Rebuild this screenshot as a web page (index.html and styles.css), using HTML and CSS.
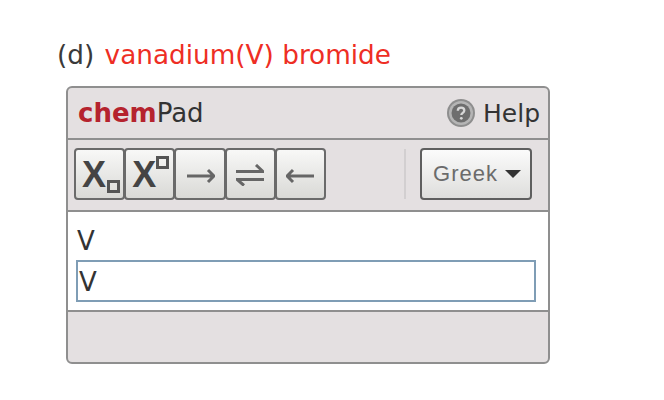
FILE: index.html
```html
<!DOCTYPE html>
<html lang="en">
<head>
    <meta charset="UTF-8">
    <title>chemPad</title>
    <link rel="stylesheet" href="styles.css">
</head>
<body>
    <div class="question">
        <p class="prompt">(d) <span class="prompt-name">vanadium(V) bromide</span></p>
        <div class="chempad">
            <div class="pad-header">
                <div class="pad-logo"><b>chem</b>Pad</div>
                <div class="pad-help">
                    <svg class="help-icon" viewBox="0 0 28 28">
                        <circle cx="14" cy="14" r="14" fill="#8e8e8e"/>
                        <circle cx="14" cy="14" r="12" fill="#b5b5b5"/>
                        <circle cx="14" cy="14" r="9.500" fill="#6e6e6e"/>
                        <path d="M10.800 11.800c0-2 1.400-3.100 3.300-3.100s3.200 1.100 3.200 2.800c0 2.400-3 2.400-3 4.600" fill="none" stroke="#d8d8d8" stroke-width="2.300"/>
                        <circle cx="14.300" cy="19.300" r="1.400" fill="#d8d8d8"/>
                    </svg>
                    <span>Help</span>
                </div>
            </div>
            <div class="pad-toolbar">
                <div class="btn-group">
                    <button class="tool-btn"><span class="x-letter">X</span><i class="box box-sub"></i></button>
                    <button class="tool-btn"><span class="x-letter">X</span><i class="box box-sup"></i></button>
                    <button class="tool-btn">
                        <svg class="arrow arrow-right" viewBox="0 0 28 22"><path d="M0 12h26M21 6l6 6-6 6" fill="none" stroke="#666" stroke-width="3"/></svg>
                    </button>
                    <button class="tool-btn">
                        <svg class="arrow" viewBox="0 0 28 22"><path d="M0 7.500h27L20 1M28 15.500H1l7 6" fill="none" stroke="#666" stroke-width="3"/></svg>
                    </button>
                    <button class="tool-btn">
                        <svg class="arrow" viewBox="0 0 28 22"><path d="M28 12H2M7 6l-6 6 6 6" fill="none" stroke="#666" stroke-width="3"/></svg>
                    </button>
                </div>
                <div class="toolbar-sep"></div>
                <button class="greek-btn">Greek<i class="caret"></i></button>
            </div>
            <div class="pad-body">
                <div class="preview">V</div>
                <div class="entry">V</div>
            </div>
            <div class="pad-footer"></div>
        </div>
    </div>
</body>
</html>
```

FILE: styles.css
```css
* {
    margin: 0;
    padding: 0;
    box-sizing: border-box;
}

body {
    font-family: 'DejaVu Sans', sans-serif;
    background: #fff;
    color: #333;
}

.question {
    padding: 39px 0 0 57px;
}

.prompt {
    font-size: 26.3px;
    line-height: 32px;
    color: #3a3a3a;
}

.prompt-name {
    margin-left: 2px;
    color: #ee2e24;
}

.chempad {
    width: 484px;
    height: 278px;
    margin: 15px 0 0 9px;
    display: flex;
    flex-direction: column;
    background: #e4e0e1;
    border: 2px solid #8f8f8f;
    border-radius: 6px;
}

.pad-header {
    height: 52px;
    padding: 0 8px 0 10px;
    display: flex;
    align-items: center;
    justify-content: space-between;
    border-bottom: 2px solid #8f8f8f;
}

.pad-logo {
    font-size: 26px;
    color: #333;
}

.pad-logo b {
    color: #b5232e;
}

.pad-help {
    display: flex;
    align-items: center;
    gap: 8px;
    font-size: 25px;
    color: #333;
}

.help-icon {
    width: 28px;
    height: 28px;
}

.pad-toolbar {
    height: 72px;
    padding: 0 16px 3px 6px;
    display: flex;
    align-items: center;
    border-bottom: 2px solid #8f8f8f;
}

.btn-group {
    display: flex;
}

.tool-btn {
    width: 51.2px;
    height: 52px;
    margin-right: -1px;
    position: relative;
    display: flex;
    align-items: center;
    justify-content: center;
    background: linear-gradient(#f8f8f7, #d9d9d6);
    border: 2px solid #6a6a6a;
    border-radius: 4px;
}

.x-letter {
    font-family: 'Liberation Sans', sans-serif;
    font-size: 36px;
    line-height: 36px;
    font-weight: bold;
    color: #444;
    margin-left: -11px;
    margin-top: 2px;
}

.box {
    position: absolute;
    width: 13px;
    height: 13px;
    border: 3px solid #555;
}

.box-sub {
    right: 3px;
    bottom: 5px;
}

.box-sup {
    right: 4px;
    top: 6px;
}

.arrow {
    width: 28px;
    height: 22px;
    margin-top: 3px;
    margin-left: -1px;
}

.arrow-right {
    margin-left: 2px;
}

.toolbar-sep {
    width: 2px;
    height: 50px;
    margin-left: auto;
    margin-right: 14px;
    background: #d2cfd0;
}

.greek-btn {
    width: 112px;
    height: 52px;
    padding-left: 2px;
    display: flex;
    align-items: center;
    justify-content: center;
    gap: 7px;
    font-family: 'Liberation Sans', sans-serif;
    font-size: 22px;
    letter-spacing: 1px;
    color: #6b6b6b;
    background: linear-gradient(#fbfbfb, #dededc);
    border: 2px solid #5f5f5f;
    border-radius: 4px;
}

.caret {
    border-top: 8px solid #333;
    border-left: 8px solid transparent;
    border-right: 8px solid transparent;
}

.pad-body {
    height: 100px;
    padding: 13px 12px 0 8px;
    background: #fff;
    border-bottom: 2px solid #8f8f8f;
}

.preview {
    font-size: 26px;
    line-height: 32px;
    padding-left: 1px;
    color: #333;
}

.entry {
    height: 42px;
    margin-top: 3px;
    padding-left: 1px;
    font-size: 26px;
    line-height: 40px;
    color: #333;
    border: 2px solid #7f9db5;
}

.pad-footer {
    flex: 1;
}
```
